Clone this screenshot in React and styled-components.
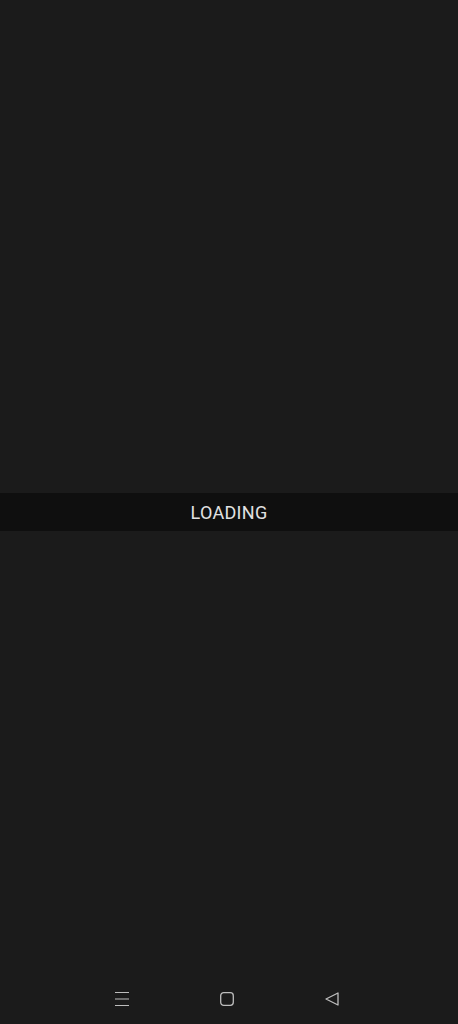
import React from 'react';
import styled, { createGlobalStyle } from 'styled-components';

const GlobalStyle = createGlobalStyle`
  html, body {
    margin: 0;
    padding: 0;
    background: #1b1b1b;
  }
  * { box-sizing: border-box; }
`;

const Screen = styled.div`
  position: relative;
  height: 100vh;
  display: flex;
  flex-direction: column;
  justify-content: center;
  background: #1b1b1b;
  font-family: Roboto, "Noto Sans", sans-serif;
`;

const LoadingBar = styled.div`
  height: 38px;
  display: flex;
  align-items: center;
  justify-content: center;
  background: #0f0f0f;
  color: #e2e2e2;
  font-size: 18px;
  letter-spacing: 0.3px;
`;

const NavBar = styled.nav`
  position: absolute;
  left: 0;
  right: 0;
  bottom: 0;
  height: 50px;
  display: flex;
  align-items: center;
  justify-content: center;
  gap: 89px;
  padding-right: 4px;
`;

const NavButton = styled.button`
  width: 16px;
  height: 16px;
  padding: 0;
  border: none;
  background: none;
  display: flex;
  align-items: center;
  justify-content: center;
  color: #bdbdbd;
`;

const App = () => (
  <>
    <GlobalStyle />
    <Screen>
      <LoadingBar>LOADING</LoadingBar>
      <NavBar>
        <NavButton aria-label="Menu">
          <svg width="14" height="16" viewBox="0 0 14 16" fill="none" stroke="currentColor" strokeWidth="1.2">
            <path d="M0 1.5h14M0 8h14M0 14.5h14" />
          </svg>
        </NavButton>
        <NavButton aria-label="Home">
          <svg width="14" height="14" viewBox="0 0 14 14" fill="none" stroke="currentColor" strokeWidth="1.3">
            <rect x="0.7" y="0.7" width="12.6" height="12.6" rx="3" />
          </svg>
        </NavButton>
        <NavButton aria-label="Back">
          <svg width="14" height="14" viewBox="0 0 14 14" fill="none" stroke="currentColor" strokeWidth="1.3" strokeLinejoin="round">
            <path d="M13 1L1 7l12 6z" />
          </svg>
        </NavButton>
      </NavBar>
    </Screen>
  </>
);

export default App;
